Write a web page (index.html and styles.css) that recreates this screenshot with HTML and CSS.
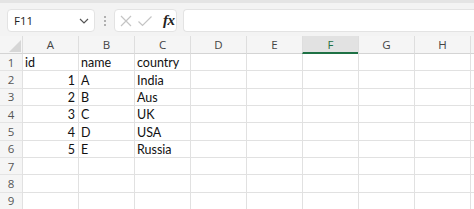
FILE: index.html
```html
<!DOCTYPE html>
<html>
<head>
<meta charset="utf-8">
<link rel="stylesheet" href="styles.css">
</head>
<body>
<div class="app">
  <div class="topstrip"></div>
  <div class="fbar">
    <div class="namebox">
      <span class="ref">F11</span>
      <svg class="chev" width="10" height="6" viewBox="0 0 10 6"><path d="M1 1 L5 5 L9 1" fill="none" stroke="#555" stroke-width="1.2"/></svg>
    </div>
    <div class="dots"><i></i><i></i><i></i></div>
    <div class="btnbox">
      <svg class="ic" width="14" height="14" viewBox="0 0 14 14"><path d="M2 2 L12 12 M12 2 L2 12" stroke="#c4c4c4" stroke-width="1.2" fill="none"/></svg>
      <svg class="ic" width="16" height="14" viewBox="0 0 16 14"><path d="M1.5 7.5 L5.5 11.5 L14.5 2.5" stroke="#c4c4c4" stroke-width="1.2" fill="none"/></svg>
      <span class="fx">fx</span>
    </div>
    <div class="finput"></div>
  </div>
  <div class="sheet">
    <div class="hdr corner"><svg width="12" height="12" viewBox="0 0 12 12"><path d="M12 0 L12 12 L0 12 Z" fill="#d6d6d6"/></svg></div>
    <div class="hdr col">A</div>
    <div class="hdr col">B</div>
    <div class="hdr col">C</div>
    <div class="hdr col">D</div>
    <div class="hdr col">E</div>
    <div class="hdr col sel">F</div>
    <div class="hdr col">G</div>
    <div class="hdr col">H</div>
    <div class="hdr col"></div>

    <div class="rh">1</div><div class="c">id</div><div class="c">name</div><div class="c">country</div><div class="c"></div><div class="c"></div><div class="c"></div><div class="c"></div><div class="c"></div><div class="c"></div>
    <div class="rh">2</div><div class="c num">1</div><div class="c">A</div><div class="c">India</div><div class="c"></div><div class="c"></div><div class="c"></div><div class="c"></div><div class="c"></div><div class="c"></div>
    <div class="rh">3</div><div class="c num">2</div><div class="c">B</div><div class="c">Aus</div><div class="c"></div><div class="c"></div><div class="c"></div><div class="c"></div><div class="c"></div><div class="c"></div>
    <div class="rh">4</div><div class="c num">3</div><div class="c">C</div><div class="c">UK</div><div class="c"></div><div class="c"></div><div class="c"></div><div class="c"></div><div class="c"></div><div class="c"></div>
    <div class="rh">5</div><div class="c num">4</div><div class="c">D</div><div class="c">USA</div><div class="c"></div><div class="c"></div><div class="c"></div><div class="c"></div><div class="c"></div><div class="c"></div>
    <div class="rh">6</div><div class="c num">5</div><div class="c">E</div><div class="c">Russia</div><div class="c"></div><div class="c"></div><div class="c"></div><div class="c"></div><div class="c"></div><div class="c"></div>
    <div class="rh">7</div><div class="c"></div><div class="c"></div><div class="c"></div><div class="c"></div><div class="c"></div><div class="c"></div><div class="c"></div><div class="c"></div><div class="c"></div>
    <div class="rh">8</div><div class="c"></div><div class="c"></div><div class="c"></div><div class="c"></div><div class="c"></div><div class="c"></div><div class="c"></div><div class="c"></div><div class="c"></div>
    <div class="rh">9</div><div class="c"></div><div class="c"></div><div class="c"></div><div class="c"></div><div class="c"></div><div class="c"></div><div class="c"></div><div class="c"></div><div class="c"></div>
  </div>
</div>
</body>
</html>
```
FILE: styles.css
```css
html, body {
  margin: 0;
  padding: 0;
  background: #ffffff;
  overflow: hidden;
}
.app {
  width: 474px;
  height: 209px;
  overflow: hidden;
  font-family: "Open Sans", "Noto Sans", sans-serif;
}
.topstrip {
  height: 3px;
  background: #e4e4e4;
}
.fbar {
  height: 33px;
  background: #f3f3f3;
  display: flex;
  align-items: flex-start;
  padding: 6px 0 0 7px;
  box-sizing: border-box;
}
.namebox {
  width: 88px;
  height: 23px;
  box-sizing: border-box;
  background: #fff;
  border: 1px solid #e3e3e3;
  border-radius: 4px;
  display: flex;
  align-items: center;
  justify-content: space-between;
  padding: 0 5px 0 6px;
}
.ref {
  font-size: 11.5px;
  color: #222;
}
.chev {
  display: block;
}
.dots {
  width: 19px;
  display: flex;
  flex-direction: column;
  align-items: center;
  justify-content: center;
  gap: 2px;
  height: 23px;
}
.dots i {
  display: block;
  width: 2px;
  height: 2px;
  background: #9a9a9a;
  border-radius: 1px;
}
.btnbox {
  width: 63px;
  height: 23px;
  box-sizing: border-box;
  background: #fff;
  border: 1px solid #e3e3e3;
  border-radius: 4px;
  display: flex;
  align-items: center;
  padding: 0 0 0 4px;
  gap: 4px;
}
.ic {
  display: block;
}
.fx {
  font-family: "Liberation Serif", serif;
  font-style: italic;
  font-weight: bold;
  font-size: 15px;
  color: #222;
  margin-left: 6px;
  letter-spacing: -0.5px;
}
.finput {
  flex: 1;
  height: 23px;
  box-sizing: border-box;
  margin-left: 6px;
  background: #fff;
  border: 1px solid #e3e3e3;
  border-right: none;
  border-radius: 4px 0 0 4px;
}
.sheet {
  display: grid;
  grid-template-columns: 22px repeat(9, 56px);
  grid-template-rows: 18px repeat(9, 17.35px);
}
.hdr {
  background: #f5f5f5;
  border-bottom: 1px solid #d4d4d4;
  box-sizing: border-box;
  font-size: 11.5px;
  color: #444;
  display: flex;
  align-items: center;
  justify-content: center;
}
.col {
  border-left: 1px solid #dedede;
}
.corner {
  align-items: flex-end;
  justify-content: flex-end;
  padding: 0 1px 1px 0;
}
.corner svg {
  display: block;
}
.sel {
  background: #e2e2e2;
  border-bottom: 2px solid #1e7145;
  color: #1e7145;
}
.rh {
  background: #f5f5f5;
  border-bottom: 1px solid #e4e4e4;
  box-sizing: border-box;
  font-size: 11.5px;
  color: #555;
  display: flex;
  align-items: center;
  justify-content: center;
}
.c {
  border-left: 1px solid #e1e1e1;
  border-bottom: 1px solid #e1e1e1;
  box-sizing: border-box;
  font-family: Lato, "Liberation Sans", sans-serif;
  font-size: 12.5px;
  color: #111;
  padding: 0 3px 0 2px;
  display: flex;
  align-items: flex-end;
  line-height: 15px;
  white-space: nowrap;
}
.num {
  justify-content: flex-end;
}
```
